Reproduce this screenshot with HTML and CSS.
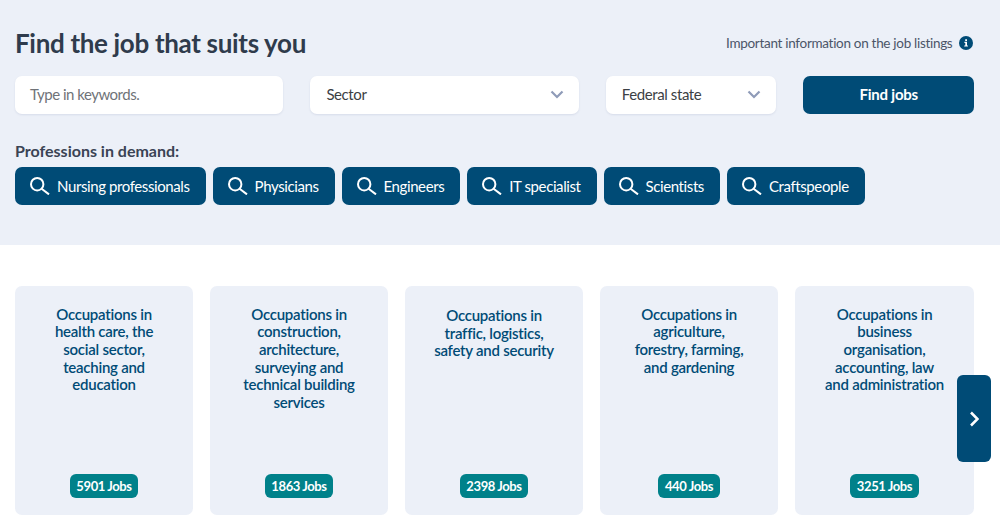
FILE: index.html
```html
<!DOCTYPE html>
<html lang="en">
<head>
<meta charset="utf-8">
<title>Find the job that suits you</title>
<link rel="stylesheet" href="styles.css">
</head>
<body>
<section class="search">
  <div class="head">
    <h1>Find the job that suits you</h1>
    <a class="info">Important information on the job listings
      <svg class="info-icon" viewBox="0 0 14 14"><circle cx="7" cy="7" r="7" fill="#004b76"/><path d="M5.4 5.8h2.6v3.7h.9v1.1H5.2V9.5h1.1V6.9h-.9zM6.2 3.2h1.8V5H6.2z" fill="#fff"/></svg>
    </a>
  </div>
  <div class="fields">
    <div class="field keywords">Type in keywords.</div>
    <div class="field select sector">Sector
      <svg class="chev" viewBox="0 0 14 9"><path d="M1.5 1.5 7 7l5.5-5.5" fill="none" stroke="#8f9bb8" stroke-width="2.2"/></svg>
    </div>
    <div class="field select state">Federal state
      <svg class="chev" viewBox="0 0 14 9"><path d="M1.5 1.5 7 7l5.5-5.5" fill="none" stroke="#8f9bb8" stroke-width="2.2"/></svg>
    </div>
    <button class="find">Find jobs</button>
  </div>
  <h2>Professions in demand:</h2>
  <div class="tags">
    <a class="tag"><svg viewBox="0 0 20 18"><circle cx="7.2" cy="7.2" r="6.2" fill="none" stroke="#fff" stroke-width="2"/><path d="m11.6 11.8 7.4 5.6" stroke="#fff" stroke-width="2"/></svg>Nursing professionals</a>
    <a class="tag"><svg viewBox="0 0 20 18"><circle cx="7.2" cy="7.2" r="6.2" fill="none" stroke="#fff" stroke-width="2"/><path d="m11.6 11.8 7.4 5.6" stroke="#fff" stroke-width="2"/></svg>Physicians</a>
    <a class="tag"><svg viewBox="0 0 20 18"><circle cx="7.2" cy="7.2" r="6.2" fill="none" stroke="#fff" stroke-width="2"/><path d="m11.6 11.8 7.4 5.6" stroke="#fff" stroke-width="2"/></svg>Engineers</a>
    <a class="tag"><svg viewBox="0 0 20 18"><circle cx="7.2" cy="7.2" r="6.2" fill="none" stroke="#fff" stroke-width="2"/><path d="m11.6 11.8 7.4 5.6" stroke="#fff" stroke-width="2"/></svg>IT specialist</a>
    <a class="tag"><svg viewBox="0 0 20 18"><circle cx="7.2" cy="7.2" r="6.2" fill="none" stroke="#fff" stroke-width="2"/><path d="m11.6 11.8 7.4 5.6" stroke="#fff" stroke-width="2"/></svg>Scientists</a>
    <a class="tag"><svg viewBox="0 0 20 18"><circle cx="7.2" cy="7.2" r="6.2" fill="none" stroke="#fff" stroke-width="2"/><path d="m11.6 11.8 7.4 5.6" stroke="#fff" stroke-width="2"/></svg>Craftspeople</a>
  </div>
</section>
<section class="cards">
  <article class="card"><h3>Occupations in<br>health care, the<br>social sector,<br>teaching and<br>education</h3><span class="count">5901 Jobs</span></article>
  <article class="card"><h3>Occupations in<br>construction,<br>architecture,<br>surveying and<br>technical building<br>services</h3><span class="count">1863 Jobs</span></article>
  <article class="card"><h3 class="low">Occupations in<br>traffic, logistics,<br>safety and security</h3><span class="count">2398 Jobs</span></article>
  <article class="card"><h3>Occupations in<br>agriculture,<br>forestry, farming,<br>and gardening</h3><span class="count">440 Jobs</span></article>
  <article class="card"><h3>Occupations in<br>business<br>organisation,<br>accounting, law<br>and administration</h3><span class="count">3251 Jobs</span></article>
  <button class="next" aria-label="Next"><svg viewBox="0 0 10 16"><path d="M2 1.5 8.5 8 2 14.5" fill="none" stroke="#fff" stroke-width="2.6"/></svg></button>
</section>
</body>
</html>
```
FILE: styles.css
```css
* { box-sizing: border-box; }
html, body { margin: 0; padding: 0; }
body {
  width: 1000px;
  height: 530px;
  overflow: hidden;
  background: #fff;
  font-family: "Lato", "Noto Sans", sans-serif;
  color: #3d4a5c;
}
.search {
  height: 245px;
  background: #ecf0f8;
  padding: 27px 26px 0 15px;
}
.head {
  display: flex;
  justify-content: space-between;
  align-items: center;
  height: 32px;
}
h1 {
  margin: 0;
  font-size: 26px;
  font-weight: 700;
  letter-spacing: -.33px;
  color: #2f3b4c;
}
.info {
  display: flex;
  align-items: center;
  gap: 7px;
  margin-right: .6px;
  font-size: 13.5px;
  letter-spacing: -.3px;
  color: #4b5568;
}
.info-icon { width: 14px; height: 14px; }
.fields {
  display: flex;
  margin-top: 17px;
  height: 38px;
}
.field {
  display: flex;
  align-items: center;
  justify-content: space-between;
  background: #fff;
  border-radius: 7px;
  padding: 0 16px 2px;
  font-size: 15px;
  letter-spacing: -.4px;
  color: #3c3f44;
  box-shadow: 0 1px 2px rgba(120, 135, 170, .18);
}
.keywords { width: 269px; margin-right: 27px; color: #6f7378; padding-left: 15px; letter-spacing: -.5px; }
.sector { width: 269px; margin-right: 27px; padding-right: 15px; }
.state { width: 171px; margin-right: 27px; padding-right: 15px; }
.chev { width: 14px; height: 9px; }
.find {
  width: 171px;
  padding: 0 0 2px;
  border: 0;
  border-radius: 7px;
  background: #004b76;
  color: #fff;
  font: 700 15px "Lato", "Noto Sans", sans-serif;
  letter-spacing: -.2px;
}
h2 {
  margin: 27px 0 0;
  height: 20px;
  line-height: 20px;
  font-size: 16px;
  font-weight: 700;
  color: #3a4354;
}
.tags {
  display: flex;
  gap: 7px;
  margin-top: 6px;
}
.tag {
  display: flex;
  align-items: center;
  gap: 7px;
  height: 38px;
  padding: 0 16px 0 15px;
  border-radius: 7px;
  background: #004b76;
  color: #fff;
  font-size: 15px;
  letter-spacing: -.4px;
}
.tag svg { width: 20px; height: 18px; flex: none; }
.cards {
  position: relative;
  display: flex;
  gap: 17px;
  padding: 41px 26px 0 15px;
}
.card {
  width: 178px;
  height: 229px;
  flex: none;
  display: flex;
  flex-direction: column;
  align-items: center;
  justify-content: space-between;
  padding: 19.5px 8px 17px;
  background: #ecf0f8;
  border-radius: 7px;
  text-align: center;
}
.card:nth-of-type(5) { width: 179px; }
h3 {
  margin: 0;
  font-size: 15px;
  font-weight: 600;
  letter-spacing: -.25px;
  line-height: 17.7px;
  color: #004b76;
}
h3.low { margin-top: 1.3px; }
.count {
  height: 24px;
  line-height: 24px;
  padding: 0 6.5px;
  border-radius: 6px;
  background: #00818a;
  color: #fff;
  font-size: 13px;
  font-weight: 700;
  letter-spacing: -.4px;
}
.next {
  position: absolute;
  left: 957px;
  top: 130px;
  width: 34px;
  height: 87px;
  padding: 0;
  border: 0;
  border-radius: 6px;
  background: #004b76;
}
.next svg { width: 10px; height: 16px; display: block; margin: auto; }
```
